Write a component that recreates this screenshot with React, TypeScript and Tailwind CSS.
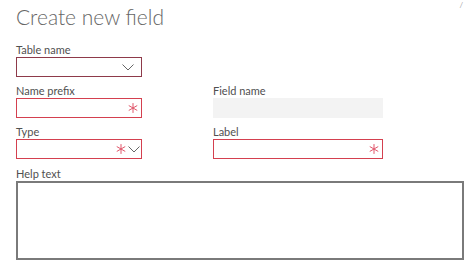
import React from 'react';

const Asterisk: React.FC = () => (
  <svg width="10" height="10" viewBox="0 0 10 10" className="shrink-0">
    <g stroke="#e0566a" strokeWidth="1" strokeLinecap="round">
      <line x1="5" y1="0.5" x2="5" y2="9.5" />
      <line x1="1.1" y1="2.75" x2="8.9" y2="7.25" />
      <line x1="1.1" y1="7.25" x2="8.9" y2="2.75" />
    </g>
  </svg>
);

const Chevron: React.FC = () => (
  <svg width="12" height="7" viewBox="0 0 12 7" className="shrink-0">
    <path d="M0.5 0.5 L6 6 L11.5 0.5" fill="none" stroke="#666" strokeWidth="1" />
  </svg>
);

const Label: React.FC<{ text: string }> = ({ text }) => (
  <div className="h-[14px] text-[11px] leading-[14px] text-[#505050]">{text}</div>
);

export default function App() {
  return (
    <div
      className="w-[474px] h-[275px] bg-white px-[16px] relative"
      style={{ fontFamily: 'Lato, "Open Sans", sans-serif' }}
    >
      <div className="absolute right-[11px] top-[1px] text-[8px] leading-[8px] text-[#aaa]">/</div>
      <h1 className="h-[43px] pt-[4px] text-[21px] leading-[26px] font-light text-[#666]">
        Create new field
      </h1>

      <div className="grid grid-cols-[126px_170px] gap-x-[71px] gap-y-[7px]">
        <div>
          <Label text="Table name" />
          <div className="h-[20px] border border-[#8e3a4a] flex items-center justify-end pr-[7px]">
            <Chevron />
          </div>
        </div>
        <div />

        <div>
          <Label text="Name prefix" />
          <div className="h-[20px] border border-[#d4404f] flex items-center justify-end pr-[3px]">
            <Asterisk />
          </div>
        </div>
        <div>
          <Label text="Field name" />
          <div className="h-[20px] bg-[#f3f3f3]" />
        </div>

        <div>
          <Label text="Type" />
          <div className="h-[20px] border border-[#d4404f] flex items-center justify-end gap-[2px] pr-[1px]">
            <Asterisk />
            <Chevron />
          </div>
        </div>
        <div>
          <Label text="Label" />
          <div className="h-[20px] border border-[#d4404f] flex items-center justify-end pr-[3px]">
            <Asterisk />
          </div>
        </div>
      </div>

      <div className="mt-[8px]">
        <Label text="Help text" />
        <div className="h-[79px] w-[448px] border-2 border-[#7a7a7a]" />
      </div>
    </div>
  );
}
